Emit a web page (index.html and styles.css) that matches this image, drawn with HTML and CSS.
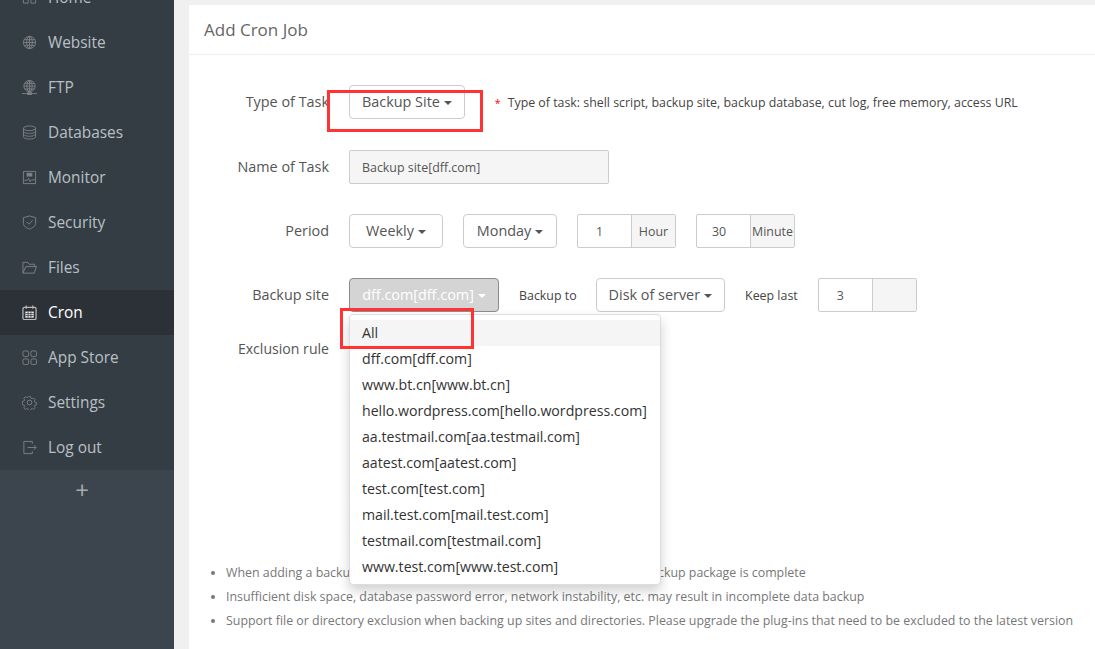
FILE: index.html
```html
<!DOCTYPE html>
<html lang="en">
<head>
<meta charset="utf-8">
<title>Add Cron Job</title>
<link rel="stylesheet" href="styles.css">
</head>
<body>
<aside class="sidebar">
  <nav class="menu">
    <a class="item"><svg class="ico" viewBox="0 0 16 16"><path d="M1.5 2h5v12h-5zM9.500 2h5v12h-5z"/></svg>Home</a>
    <a class="item"><svg class="ico" viewBox="0 0 16 16"><circle cx="8" cy="8" r="6.500"/><ellipse cx="8" cy="8" rx="3" ry="6.500"/><path d="M8 1.500v13M1.500 8h13M2.500 5h11M2.500 11h11"/></svg>Website</a>
    <a class="item"><svg class="ico" viewBox="0 0 16 16"><circle cx="8" cy="6.500" r="6"/><ellipse cx="8" cy="6.500" rx="2.800" ry="6"/><path d="M8 .5v12M2 6.500h12M2.800 3.500h10.400M2.800 9.500h10.400M0 14.500h16"/><path class="fill" d="M5.500 13h5v3h-5z"/></svg>FTP</a>
    <a class="item"><svg class="ico" viewBox="0 0 16 16"><ellipse cx="8" cy="3.500" rx="6.500" ry="2.500"/><path d="M1.500 3.500v9c0 1.400 2.900 2.500 6.500 2.500s6.500-1.100 6.500-2.500v-9M1.500 6.500c0 1.400 2.900 2.500 6.500 2.500s6.500-1.100 6.500-2.500M1.500 9.500c0 1.400 2.900 2.500 6.500 2.500s6.500-1.100 6.500-2.500"/></svg>Databases</a>
    <a class="item"><svg class="ico" viewBox="0 0 16 16"><path d="M1.500 1.500h13v13h-13z"/><path class="fill" d="M5 3h6v4h-6z"/><path d="M2.500 11h3l1.500-2 1.500 3.500 1.500-2h4"/></svg>Monitor</a>
    <a class="item"><svg class="ico" viewBox="0 0 16 16"><path d="M8 1l6.500 1.800v6c0 3-3 5-6.500 6.200-3.500-1.200-6.500-3.200-6.500-6.200v-6z"/><path d="M5 7.500l2.300 2.300 4-4"/></svg>Security</a>
    <a class="item"><svg class="ico" viewBox="0 0 16 16"><path d="M1 14V2.500h5l1.500 2h6V7M1 14h12l2.500-7H4z"/></svg>Files</a>
    <a class="item item-on"><svg class="ico" viewBox="0 0 16 16"><rect x="1" y="2.500" width="14" height="13" rx="1.500"/><path d="M4.500 0.500v3.500M11.500 0.500v3.500"/><path class="fill" d="M3.500 7h9v6.500h-9z"/><path class="cut" d="M3.500 9.200h9M3.500 11.300h9M6.500 7v6.500M9.500 7v6.500"/></svg>Cron</a>
    <a class="item"><svg class="ico" viewBox="0 0 16 16"><rect x="1" y="1" width="6" height="6" rx="1.500"/><rect x="9.500" y="1" width="6" height="6" rx="1.500"/><rect x="1" y="9.500" width="6" height="6" rx="1.500"/><rect x="9.500" y="9.500" width="6" height="6" rx="1.500"/></svg>App Store</a>
    <a class="item"><svg class="ico" viewBox="0 0 16 16"><path d="M6.700 1h2.600l.4 2 1.500.7 1.800-1.100 1.800 1.900-1.100 1.700.7 1.500 2 .4v2.600l-2 .4-.7 1.500 1.100 1.700-1.800 1.900-1.800-1.100-1.500.7-.4 2H6.700l-.4-2-1.500-.7-1.800 1.100-1.800-1.900 1.100-1.700-.7-1.500-2-.4V6.600l2-.4.7-1.500-1.100-1.700 1.800-1.900 1.800 1.100 1.500-.7z" transform="translate(.8 .8) scale(.9)"/><circle cx="8" cy="8" r="2.500"/></svg>Settings</a>
    <a class="item"><svg class="ico" viewBox="0 0 16 16"><path d="M11 4V1.500H2v13h9V12M6 8h9M12.500 5.500L15 8l-2.500 2.500"/></svg>Log out</a>
  </nav>
  <div class="add">+</div>
</aside>
<main class="page">
  <section class="card">
    <h1 class="title">Add Cron Job</h1>
    <form class="form">
      <div class="row">
        <label class="label">Type of Task</label>
        <button type="button" class="btn">Backup Site<i class="caret"></i></button>
        <p class="hint"><span class="star">*</span>Type of task: shell script, backup site, backup database, cut log, free memory, access URL</p>
      </div>
      <div class="row">
        <label class="label">Name of Task</label>
        <div class="readonly">Backup site[dff.com]</div>
      </div>
      <div class="row">
        <label class="label">Period</label>
        <button type="button" class="btn btn-week">Weekly<i class="caret"></i></button>
        <button type="button" class="btn btn-day">Monday<i class="caret"></i></button>
        <div class="group"><span class="num">1</span><span class="unit">Hour</span></div>
        <div class="group"><span class="num num-wide">30</span><span class="unit">Minute</span></div>
      </div>
      <div class="row">
        <label class="label">Backup site</label>
        <div class="drop">
          <button type="button" class="btn btn-open">dff.com[dff.com]<i class="caret"></i></button>
          <ul class="menu-list">
            <li class="opt opt-on">All</li>
            <li class="opt">dff.com[dff.com]</li>
            <li class="opt">www.bt.cn[www.bt.cn]</li>
            <li class="opt">hello.wordpress.com[hello.wordpress.com]</li>
            <li class="opt">aa.testmail.com[aa.testmail.com]</li>
            <li class="opt">aatest.com[aatest.com]</li>
            <li class="opt">test.com[test.com]</li>
            <li class="opt">mail.test.com[mail.test.com]</li>
            <li class="opt">testmail.com[testmail.com]</li>
            <li class="opt">www.test.com[www.test.com]</li>
          </ul>
        </div>
        <span class="mini mini-to">Backup to</span>
        <button type="button" class="btn">Disk of server<i class="caret"></i></button>
        <span class="mini mini-keep">Keep last</span>
        <div class="group group-flush"><span class="num">3</span><span class="unit"></span></div>
      </div>
      <div class="row row-rule">
        <label class="label">Exclusion rule</label>
      </div>
    </form>
    <ul class="notes">
      <li>When adding a backup task for the first time, please make sure that this backup package is complete</li>
      <li>Insufficient disk space, database password error, network instability, etc. may result in incomplete data backup</li>
      <li>Support file or directory exclusion when backing up sites and directories. Please upgrade the plug-ins that need to be excluded to the latest version</li>
    </ul>
    <div class="mark mark-type"></div>
    <div class="mark mark-all"></div>
  </section>
</main>
</body>
</html>
```
FILE: styles.css
```css
* { box-sizing: border-box; }
html, body { margin: 0; height: 649px; overflow: hidden; }
body { display: flex; font-family: "Open Sans", "Noto Sans", sans-serif; font-size: 14.4px; color: #555; background: #f0f0f0; }

.sidebar { width: 174px; flex: none; height: 649px; background: #3c444d; overflow: hidden; }
.menu { margin-top: -25px; background: #353d44; }
.item { display: flex; align-items: center; height: 45px; padding: 0 0 0 22px; color: #b8c0c6; font-size: 15.4px; }
.item-on { background: #2c3138; color: #fff; }
.ico { width: 15px; height: 15px; margin-right: 11px; flex: none; fill: none; stroke: #7c8186; stroke-width: 1; }
.ico .fill { fill: #7c8186; stroke: none; }
.item-on .ico { stroke: #bbb; stroke-width: 1.3; }
.item-on .ico .fill { fill: #eee; }
.item-on .ico .cut { stroke: #2c3138; stroke-width: .8; }
.add { padding-right: 10px; text-align: center; font-size: 24px; line-height: 40px; color: #aaa; }

.page { flex: 1; padding: 5px 0 0 15px; min-width: 0; }
.card { position: relative; height: 644px; background: #fff; }
.title { margin: 0; height: 50px; padding-left: 15px; border-bottom: 1px solid #eee; font-size: 17px; font-weight: 400; line-height: 49px; color: #666; }

.form { padding-top: 30px; }
.row { display: flex; align-items: center; height: 34px; margin-bottom: 30px; }
.row:first-child { margin-bottom: 31px; }
.label { width: 140px; margin-right: 20px; padding-bottom: 2px; text-align: right; color: #555; }
.btn { height: 34px; padding: 0 12px 2px; border: 1px solid #ccc; border-radius: 4px; background: #fff; font: inherit; color: #555; white-space: nowrap; }
.caret { display: inline-block; margin-left: 4px; vertical-align: middle; border-top: 4px solid #555; border-left: 4px solid transparent; border-right: 4px solid transparent; }
.btn-open { background: #d4d4d4; border-color: #8c8c8c; color: #fff; width: 150px; }
.btn-open .caret { border-top-color: #fff; }
.btn-week { width: 94px; }
.btn-day { width: 94px; margin-left: 20px; }
.hint { margin: 0 0 0 30px; font-size: 12.36px; color: #444; }
.star { color: #f00; font-size: 10.5px; margin-right: 7px; }
.readonly { width: 260px; height: 34px; padding-left: 12px; border: 1px solid #ccc; border-radius: 2px; background: #f5f5f5; font-size: 12.4px; line-height: 34px; color: #555; }
.group { display: flex; width: 99px; height: 34px; margin-left: 20px; border: 1px solid #ccc; border-radius: 2px; font-size: 12.4px; color: #555; }
.group-flush { margin-left: 0; }
.num { width: 53px; padding-left: 18px; line-height: 33px; }
.num-wide { padding-left: 15px; }
.unit { flex: 1; border-left: 1px solid #ccc; background: #f5f5f5; text-align: center; line-height: 33px; white-space: nowrap; }
.drop { position: relative; }
.mini { font-size: 12.4px; color: #444; }
.mini-to { margin: 0 19px 0 20px; }
.mini-keep { margin: 0 20px; }
.menu-list { position: absolute; z-index: 2; left: 0; top: 36px; width: 312px; margin: 0; padding: 5px 0 0; height: 271px; list-style: none; background: #fff; border: 1px solid #ddd; border-radius: 4px; box-shadow: 0 6px 12px rgba(0, 0, 0, .18); font-size: 14.15px; }
.opt { height: 26px; padding-left: 12px; line-height: 26px; color: #333; white-space: nowrap; }
.opt-on { background: #f5f5f5; }

.row-rule { margin-bottom: 0; margin-top: -10px; }
.row-rule .label { font-size: 14.1px; }
.notes { margin: 195px 0 0; padding: 0 0 0 37px; font-size: 12.4px; color: #777; }
.notes li { height: 24px; line-height: 24px; white-space: nowrap; }

.mark { position: absolute; z-index: 3; border: 3px solid #f33; }
.mark-type { left: 138px; top: 85px; width: 156px; height: 42px; }
.mark-all { left: 151px; top: 303px; width: 134px; height: 41px; }
```
